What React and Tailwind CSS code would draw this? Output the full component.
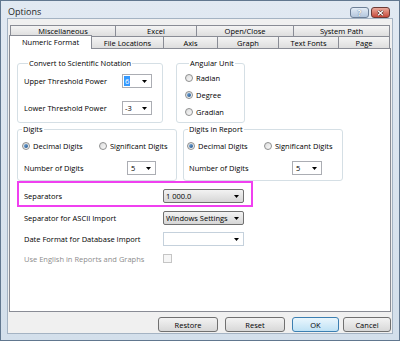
import React from "react";

const Arrow = () => (
  <svg width="5" height="3" viewBox="0 0 5 3" className="shrink-0">
    <path d="M0 0H5L2.5 3Z" fill="#000" />
  </svg>
);

function Combo({ className = "", button = false, children }) {
  const base = button
    ? "border-[#707070] bg-gradient-to-b from-[#f3f3f3] to-[#d6d6d6] rounded-[2px]"
    : "border-[#abadb3] bg-white";
  return (
    <div className={`h-[14px] border flex items-center pl-[1px] pr-[4px] shrink-0 ${base} ${className}`}>
      <div className="flex-1 flex items-center">{children}</div>
      <Arrow />
    </div>
  );
}

function Radio({ checked, label, className = "" }) {
  return (
    <div className={`flex items-center h-[11px] ${className}`}>
      <div className="w-[8px] h-[8px] rounded-full border border-[#8e8f8f] bg-gradient-to-br from-[#dcdcdc] to-[#fbfbfb] flex items-center justify-center shrink-0">
        {checked && <div className="w-[4px] h-[4px] rounded-full bg-gradient-to-br from-[#7eb0e0] to-[#1c4f86]" />}
      </div>
      <span className="ml-[3px] whitespace-nowrap">{label}</span>
    </div>
  );
}

function Tab({ label, className = "", selected = false }) {
  if (selected) {
    return (
      <div className={`relative z-10 -mt-px h-[14px] border border-b-0 border-[#898c95] bg-white flex items-center justify-center pb-[2px] font-medium ${className}`}>
        {label}
      </div>
    );
  }
  return (
    <div className={`h-full border border-b-0 border-[#898c95] bg-gradient-to-b from-[#f4f4f4] to-[#dedede] flex items-center justify-center font-medium -ml-px first:ml-0 ${className}`}>
      {label}
    </div>
  );
}

function Group({ legend, className = "", children }) {
  return (
    <fieldset className={`border border-[#d5dfe5] rounded-[3px] shrink-0 ${className}`}>
      <legend className="ml-[4px] px-[1px] leading-[10px]">{legend}</legend>
      {children}
    </fieldset>
  );
}

function Btn({ label, className = "", def = false }) {
  const st = def
    ? "border-[#3c7fb1] bg-gradient-to-b from-[#eaf6fd] to-[#bfe2f5]"
    : "border-[#707070] bg-gradient-to-b from-[#f3f3f3] to-[#d8d8d8]";
  return (
    <div className={`h-[15px] border rounded-[3px] flex items-center justify-center ${st} ${className}`}>
      {label}
    </div>
  );
}

export default function App() {
  return (
    <div className="w-[400px] h-[341px] flex flex-col bg-gradient-to-b from-[#e1e9f2] to-[#d3dfeb] border border-[#61778f] font-['Open_Sans',sans-serif] text-black text-[7.5px] leading-[10px] overflow-hidden">
      {/* title bar */}
      <div className="h-[17px] flex items-start shrink-0">
        <div className="pl-[7px] pt-[5px] text-[9px] leading-[12px] text-[#1e1e1e]">Options</div>
        <div className="ml-auto mt-[6px] mr-[9px] flex">
          <div className="w-[19px] h-[11px] rounded-[3px] border border-[#6d7f96] bg-gradient-to-b from-[#e3ecf6] to-[#b3c6dc] flex items-center justify-center">
            <span className="text-[8px] leading-[8px] font-bold text-white [text-shadow:0_0_1px_#2d4763]">?</span>
          </div>
          <div className="ml-[2px] w-[19px] h-[11px] rounded-[3px] border border-[#6b3a35] bg-gradient-to-b from-[#e9a99c] to-[#c5483b] flex items-center justify-center">
            <svg width="7" height="6" viewBox="0 0 7 6">
              <path d="M1 0.8L6 5.2M6 0.8L1 5.2" stroke="#3b1a16" strokeWidth="2.2" />
              <path d="M1 0.8L6 5.2M6 0.8L1 5.2" stroke="#fff" strokeWidth="1.3" />
            </svg>
          </div>
        </div>
      </div>

      {/* client */}
      <div className="mx-[6px] h-[316px] shrink-0 bg-[#f0f0f0] border border-[#a4b3c3] flex flex-col">
        {/* tab row 1 */}
        <div className="mt-[6px] ml-[2px] h-[11px] flex">
          <Tab label="Miscellaneous" className="w-[106px]" />
          <Tab label="Excel" className="w-[82px]" />
          <Tab label="Open/Close" className="w-[98px]" />
          <Tab label="System Path" className="w-[97px]" />
        </div>
        {/* tab row 2 */}
        <div className="ml-[1px] h-[12px] flex">
          <Tab label="Numeric Format" selected className="w-[83px]" />
          <Tab label="File Locations" className="w-[73px]" />
          <Tab label="Axis" className="w-[55px]" />
          <Tab label="Graph" className="w-[62px]" />
          <Tab label="Text Fonts" className="w-[61px]" />
          <Tab label="Page" className="w-[52px]" />
        </div>

        {/* panel */}
        <div className="ml-[1px] w-[382px] h-[264px] shrink-0 border border-[#898c95] bg-white pl-[7px] pt-[9px] flex flex-col">
          {/* Row A */}
          <div className="flex items-start">
            <Group legend="Convert to Scientific Notation" className="w-[146px] h-[65px] pl-[6px]">
              <div className="mt-[6px] flex items-center h-[14px]">
                <span className="w-[98px] shrink-0">Upper Threshold Power</span>
                <Combo className="w-[30px] border-[#8fa9c4]">
                  <span className="bg-[#3399ff] text-white px-[1px] leading-[10px]">6</span>
                </Combo>
              </div>
              <div className="mt-[13px] flex items-center h-[14px]">
                <span className="w-[98px] shrink-0">Lower Threshold Power</span>
                <Combo className="w-[30px]">
                  <span className="pl-[1px]">-3</span>
                </Combo>
              </div>
            </Group>
            <Group legend="Angular Unit" className="ml-[13px] w-[69px] h-[65px] pl-[8px]">
              <div className="mt-[4px] flex flex-col gap-[6px]">
                <Radio label="Radian" />
                <Radio label="Degree" checked />
                <Radio label="Gradian" />
              </div>
            </Group>
          </div>

          {/* Row B */}
          <div className="mt-[1px] flex items-start">
            <Group legend="Digits" className="w-[160px] h-[57px]">
              <div className="mt-[6px] pl-[4px] flex">
                <Radio label="Decimal Digits" checked className="w-[77px]" />
                <Radio label="Significant Digits" />
              </div>
              <div className="mt-[10px] pl-[6px] flex items-center h-[14px]">
                <span className="w-[103px] shrink-0">Number of Digits</span>
                <Combo className="w-[29px]">
                  <span className="pl-[2px]">5</span>
                </Combo>
              </div>
            </Group>
            <Group legend="Digits in Report" className="ml-[6px] w-[160px] h-[57px]">
              <div className="mt-[6px] pl-[3px] flex">
                <Radio label="Decimal Digits" checked className="w-[77px]" />
                <Radio label="Significant Digits" />
              </div>
              <div className="mt-[10px] pl-[5px] flex items-center h-[14px]">
                <span className="w-[103px] shrink-0">Number of Digits</span>
                <Combo className="w-[30px]">
                  <span className="pl-[2px]">5</span>
                </Combo>
              </div>
            </Group>
          </div>

          {/* Row C - Separators (highlighted) */}
          <div className="w-[236px] h-[26px] border-2 border-[#f040f0] pt-[6px] pl-[5px] flex items-start">
            <span className="w-[139px] h-[14px] flex items-center shrink-0">Separators</span>
            <Combo button className="w-[81px]">
              <span className="pl-[1px]">1 000.0</span>
            </Combo>
          </div>

          {/* Row D */}
          <div className="mt-[4px] pl-[7px] flex items-center h-[14px]">
            <span className="w-[139px] shrink-0">Separator for ASCII Import</span>
            <Combo button className="w-[81px]">
              <span className="pl-[1px]">Windows Settings</span>
            </Combo>
          </div>

          {/* Row E */}
          <div className="mt-[7px] pl-[7px] flex items-center h-[14px]">
            <span className="w-[139px] shrink-0">Date Format for Database Import</span>
            <Combo className="w-[81px] border-[#c5d1dc]" />
          </div>

          {/* Row F */}
          <div className="mt-[8px] pl-[7px] flex items-center h-[9px]">
            <span className="w-[139px] shrink-0 text-[#8d8d8d]">Use English in Reports and Graphs</span>
            <div className="w-[9px] h-[9px] border border-[#c5c5c5] bg-[#f6f6f6]" />
          </div>
        </div>

        {/* buttons */}
        <div className="mt-[5px] pl-[150px] flex">
          <Btn label="Restore" className="w-[60px]" />
          <Btn label="Reset" className="ml-[7px] w-[60px]" />
          <Btn label="OK" def className="ml-[7px] w-[47px]" />
          <Btn label="Cancel" className="ml-[4px] w-[48px]" />
        </div>
      </div>
      <div className="flex-1" />
    </div>
  );
}
